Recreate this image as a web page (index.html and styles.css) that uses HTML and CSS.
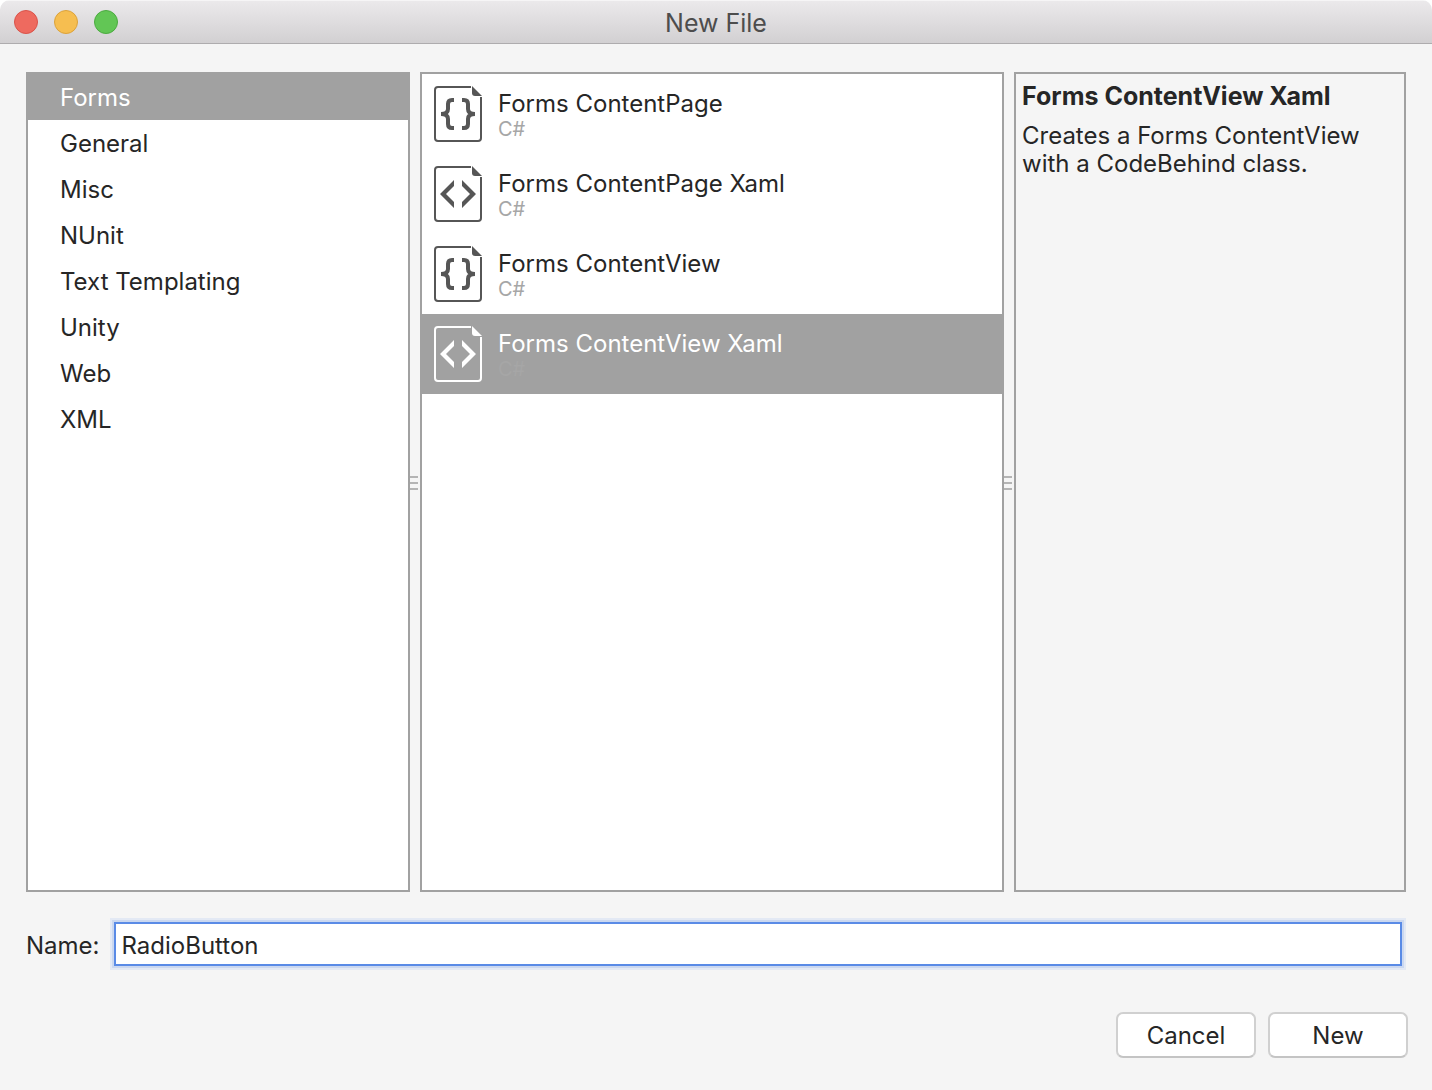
FILE: index.html
```html
<!DOCTYPE html>
<html lang="en">
  <head>
    <meta charset="utf-8" />
    <meta name="viewport" content="width=device-width, initial-scale=1.0" />
    <title>New File</title>
    <link rel="stylesheet" href="styles.css">
  </head>

  <body>
    <svg class="sprite" aria-hidden="true">
      <symbol id="page" viewBox="0 0 48 56">
        <path d="M37 1H4Q1 1 1 4V52Q1 55 4 55H44Q47 55 47 52V11" fill="none" stroke="currentColor" stroke-width="2" />
        <path d="M38 0L48 10H41Q38 10 38 7Z" fill="currentColor" />
      </symbol>
      <symbol id="braces" viewBox="0 0 48 56">
        <use href="#page" />
        <path d="M20 14H18Q14 14 14 18V23Q14 28 7 28Q14 28 14 33V38Q14 42 18 42H20M28 14H30Q34 14 34 18V23Q34 28 41 28Q34 28 34 33V38Q34 42 30 42H28" fill="none" stroke="currentColor" stroke-width="4" />
      </symbol>
      <symbol id="tags" viewBox="0 0 48 56">
        <use href="#page" />
        <path d="M20 14V20L12 28L20 36V42L6 28ZM28 14V20L36 28L28 36V42L42 28Z" fill="currentColor" />
      </symbol>
    </svg>

    <div class="window">
      <header class="titlebar">
        <div class="lights">
          <button class="light close" aria-label="Close"></button>
          <button class="light minimize" aria-label="Minimize"></button>
          <button class="light zoom" aria-label="Zoom"></button>
        </div>
        <h1>New File</h1>
      </header>

      <form class="dialog">
        <div class="panes">
          <nav class="pane categories">
            <button type="button" class="category active">Forms</button>
            <button type="button" class="category">General</button>
            <button type="button" class="category">Misc</button>
            <button type="button" class="category">NUnit</button>
            <button type="button" class="category">Text Templating</button>
            <button type="button" class="category">Unity</button>
            <button type="button" class="category">Web</button>
            <button type="button" class="category">XML</button>
          </nav>

          <div class="splitter"><i></i><i></i><i></i></div>

          <div class="pane templates">
            <button type="button" class="template">
              <svg class="icon"><use href="#braces" /></svg>
              <span class="info"><span class="name">Forms ContentPage</span><span class="lang">C#</span></span>
            </button>
            <button type="button" class="template">
              <svg class="icon"><use href="#tags" /></svg>
              <span class="info"><span class="name">Forms ContentPage Xaml</span><span class="lang">C#</span></span>
            </button>
            <button type="button" class="template">
              <svg class="icon"><use href="#braces" /></svg>
              <span class="info"><span class="name">Forms ContentView</span><span class="lang">C#</span></span>
            </button>
            <button type="button" class="template active">
              <svg class="icon"><use href="#tags" /></svg>
              <span class="info"><span class="name">Forms ContentView Xaml</span><span class="lang">C#</span></span>
            </button>
          </div>

          <div class="splitter"><i></i><i></i><i></i></div>

          <section class="pane details">
            <h2>Forms ContentView Xaml</h2>
            <p>Creates a Forms ContentView with a CodeBehind class.</p>
          </section>
        </div>

        <div class="field">
          <label for="fileName">Name:</label>
          <input type="text" id="fileName" name="fileName" value="RadioButton" />
        </div>

        <div class="actions">
          <button type="button">Cancel</button>
          <button type="submit">New</button>
        </div>
      </form>
    </div>

    <script>
      // only one row can be selected in each list
      ['.category', '.template'].forEach((selector) => {
        const rows = document.querySelectorAll(selector);
        rows.forEach((row) => {
          row.addEventListener('click', () => {
            rows.forEach((r) => r.classList.remove('active'));
            row.classList.add('active');
          });
        });
      });
    </script>
  </body>
</html>
```

FILE: styles.css
```css
* {
  box-sizing: border-box;
}

body {
  margin: 0;
  background: #fff;
  color: #262626;
  font-family: Inter, 'Liberation Sans', sans-serif;
  font-size: 24px;
  line-height: 28px;
}

button,
input {
  font: inherit;
  color: inherit;
}

h1,
h2,
p {
  margin: 0;
}

.sprite {
  display: none;
}

.window {
  display: flex;
  flex-direction: column;
  min-height: 100vh;
  background: #f5f5f5;
  border-radius: 10px 10px 0 0;
  overflow: hidden;
}

/* title bar */

.titlebar {
  display: grid;
  grid-template-columns: 1fr auto 1fr;
  align-items: center;
  height: 44px;
  padding: 0 14px;
  background: linear-gradient(#ebe9eb, #d2d0d2);
  border-top: 1px solid #f6f5f6;
  border-bottom: 1px solid #aeacae;
}

.titlebar h1 {
  padding-top: 2px;
  font-size: 25px;
  font-weight: 400;
  color: #4d4d4d;
}

.lights {
  display: flex;
  gap: 16px;
}

.light {
  width: 24px;
  height: 24px;
  padding: 0;
  border: 1px solid;
  border-radius: 50%;
}

.close {
  background: #ee6a5f;
  border-color: #d9534a;
}

.minimize {
  background: #f6be50;
  border-color: #dba23b;
}

.zoom {
  background: #62c655;
  border-color: #4caa40;
}

/* panes */

.dialog {
  display: flex;
  flex-direction: column;
  flex: 1;
  padding: 28px 26px 32px;
}

.panes {
  display: grid;
  grid-template-columns: 384fr 10px 584fr 10px 392fr;
  flex: 1;
}

.pane {
  display: flex;
  flex-direction: column;
  background: #fff;
  border: 2px solid #a1a1a1;
}

.details {
  gap: 12px;
  padding: 8px 6px;
  background: #f5f5f5;
}

.details h2 {
  font-size: 25px;
  font-weight: 700;
}

.category {
  height: 46px;
  padding: 2px 32px 0;
  background: none;
  border: none;
  text-align: left;
}

.template {
  display: flex;
  align-items: center;
  gap: 16px;
  height: 80px;
  padding: 0 12px;
  background: none;
  border: none;
  text-align: left;
}

.category.active,
.template.active {
  background: #a1a1a1;
  color: #fff;
}

.icon {
  width: 48px;
  height: 56px;
  color: #565656;
}

.active .icon {
  color: #fff;
}

.info {
  display: flex;
  flex-direction: column;
  padding-top: 4px;
  line-height: 26px;
}

.lang {
  font-size: 20px;
  line-height: 24px;
  color: #a6a6a6;
}

.splitter {
  display: flex;
  flex-direction: column;
  justify-content: center;
  gap: 4px;
  padding-top: 2px;
  cursor: col-resize;
}

.splitter i {
  width: 8px;
  height: 2px;
  background: #b4b4b4;
}

/* name and buttons */

.field {
  display: flex;
  align-items: center;
  gap: 14px;
  margin: 30px 4px 46px 0;
}

.field label {
  padding-top: 4px;
}

.field input {
  flex: 1;
  height: 44px;
  padding: 2px 6px 0;
  background: #fff;
  border: 2px solid #5a8be6;
  outline: none;
  box-shadow: 0 0 0 2px #cbd8f0, 0 0 0 4px #e3e9f4;
}

.actions {
  display: flex;
  justify-content: flex-end;
  gap: 12px;
  margin-right: -2px;
}

.actions button {
  width: 140px;
  height: 46px;
  padding: 2px 0 0;
  background: #fff;
  border: 2px solid #d0d0d0;
  border-bottom-color: #c4c4c4;
  border-radius: 7px;
}
```
